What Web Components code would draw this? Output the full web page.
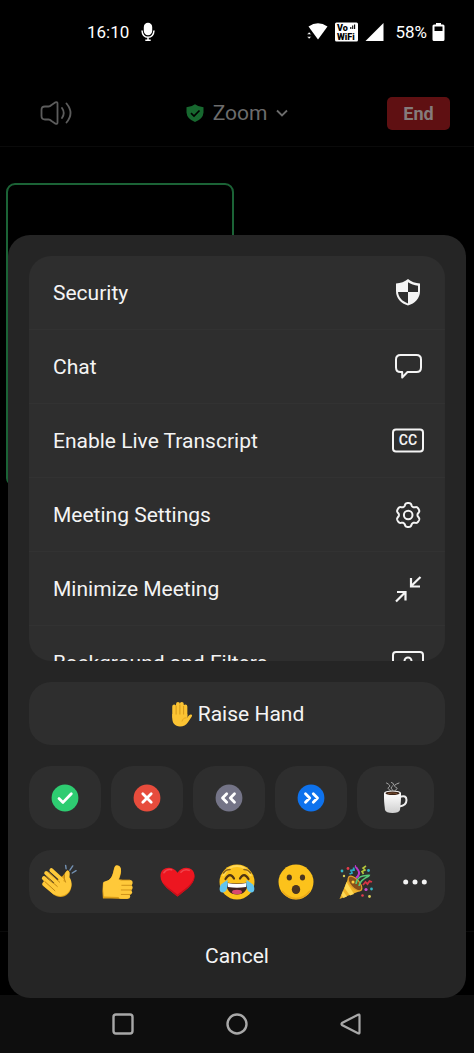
<!DOCTYPE html>
<html lang="en">
<head>
<meta charset="utf-8">
<meta name="viewport" content="width=device-width, initial-scale=1">
<title>Zoom meeting</title>
<style>
  html, body { margin: 0; background: #000; }
  body { font-family: Roboto, "Liberation Sans", sans-serif; color: #f4f4f4; }
</style>
</head>
<body>
<phone-screen>
  <status-bar slot="screen" time="16:10" battery="58%"></status-bar>
  <meeting-header slot="screen" name="Zoom"></meeting-header>
  <meeting-stage slot="screen"></meeting-stage>
  <system-nav slot="screen"></system-nav>
  <more-sheet slot="overlay"></more-sheet>
</phone-screen>

<script>
const BUTTON_RESET = `
  button { appearance: none; border: 0; margin: 0; padding: 0; background: none;
    color: inherit; font: inherit; cursor: pointer; }
  svg { display: block; flex: none; }
`;

function define(name, render) {
  customElements.define(name, class extends HTMLElement {
    connectedCallback() {
      if (this.shadowRoot) return;
      const t = document.createElement('template');
      t.innerHTML = render(this);
      this.attachShadow({ mode: 'open' }).append(t.content.cloneNode(true));
    }
  });
}

const svg = (w, h, body, vb = `0 0 ${w} ${h}`) =>
  `<svg width="${w}" height="${h}" viewBox="${vb}" fill="none" aria-hidden="true">${body}</svg>`;

const LINE = 'stroke="#f4f4f4" stroke-width="2" stroke-linecap="round" stroke-linejoin="round"';

/* Outline of a six-toothed gear with rounded teeth. */
const gearPath = (cx, cy) => {
  const points = [];
  for (let i = 0; i < 180; i++) {
    const a = i * Math.PI / 90 - Math.PI / 2;
    const wave = Math.cos((a + Math.PI / 2) * 6);
    const r = 10.5 + 1.5 * Math.tanh(1.6 * (wave + 0.3));
    points.push(`${(cx + r * Math.cos(a)).toFixed(2)} ${(cy + r * Math.sin(a)).toFixed(2)}`);
  }
  return `M${points.join('L')}Z`;
};

const ICONS = {
  security: svg(32, 32, `
    <path d="M16 2C19 4.600 23.500 6.300 28 6.600V14C28 21.500 23 26.300 16 28.600C9 26.300 4 21.500 4 14V6.600C8.500 6.300 13 4.600 16 2Z" fill="#f4f4f4"/>
    <path d="M16 5.200C18.800 7.100 22.200 8.300 26 8.800V15H16Z" fill="#2e2e2e"/>
    <path d="M6 15H16V26.400C10.500 24.400 6.400 20.600 6 15Z" fill="#2e2e2e"/>`),
  chat: svg(32, 32, `<path d="M8.500 4H24.500Q29 4 29 8.500V16.500Q29 21 24.500 21H15.500L10.200 26.500V21H8.500Q4 21 4 16.500V8.500Q4 4 8.500 4Z" ${LINE}/>`),
  transcript: svg(32, 32, `
    <rect x="1" y="4.500" width="30" height="22" rx="3" ${LINE}/>
    <text x="16" y="20" text-anchor="middle" font-family="Roboto, sans-serif" font-size="14" font-weight="600" fill="#f4f4f4">CC</text>`),
  settings: svg(32, 32, `<path d="${gearPath(16.2, 16)}" ${LINE}/><circle cx="16.200" cy="16" r="4.300" ${LINE}/>`),
  minimize: svg(32, 32, `
    <path d="M28.500 4L19.500 12.800M19 5V13.500H28M4 28.500L13 19.500M5 19H13.500V27.500" stroke="#f4f4f4" stroke-width="2.200"/>`),
  background: svg(32, 32, `
    <rect x="1" y="5" width="30" height="22" rx="3" ${LINE}/>
    <circle cx="16" cy="14" r="3.500" ${LINE}/><path d="M9 26Q10 20 16 20T23 26" ${LINE}/>`),
};

const disc = (color, mark) => svg(28, 28, `
  <circle cx="14" cy="14" r="13.400" fill="${color}"/>
  <path d="${mark}" stroke="#fff" stroke-width="2.800" stroke-linecap="round" stroke-linejoin="round"/>`);

const EMOJI = {
  hand: svg(24, 28, `
    <g stroke="#fcc433" stroke-width="3.900" stroke-linecap="round">
      <path d="M4.200 6.500V17M8 4V16M11.800 4V16M15.400 6.500V17"/></g>
    <path d="M2.300 14H17.300V18C18.300 15.500 19.800 14.200 21.300 14.500C22.500 14.800 22.200 16 21.500 17L17.800 22.500C16 25.400 13.500 26.500 10 26.500C4.800 26.500 2.300 22.800 2.300 18.500Z" fill="#fcc433"/>
    <path d="M6.100 6V14.500M9.900 4.500V14.500M13.600 6V14.500" stroke="#c98d14" stroke-width=".8"/>
    <path d="M12 21.500C12.500 19 14 17.800 16.500 17.800" stroke="#e5a51c" stroke-width=".9"/>`),
  yes: disc('#2ecc71', 'M8 14.600L12 18.400L20.300 9.800'),
  no: disc('#e74c3c', 'M9.800 9.800L18.200 18.200M18.200 9.800L9.800 18.200'),
  slower: disc('#747487', 'M11.700 9.700L7.500 14L11.700 18.300M19.500 9.700L15.300 14L19.500 18.300'),
  faster: disc('#0e72ed', 'M8.500 9.700L12.700 14L8.500 18.300M16.300 9.700L20.500 14L16.300 18.300'),
  coffee: svg(28, 36, `
    <defs><linearGradient id="m" x1="0" y1="0" x2="0" y2="1"><stop stop-color="#fff"/><stop offset="1" stop-color="#cfcfcf"/></linearGradient></defs>
    <path d="M18.500 17Q25.500 14.500 25.500 20Q25.500 25.500 18.500 26.500" stroke="#eee" stroke-width="2"/>
    <path d="M3 13V18C3 23 3.800 27 4 30Q5 33 11.500 33T19 30C19.200 27 20 23 20 18V13Z" fill="url(#m)"/>
    <ellipse cx="11.500" cy="13" rx="8.500" ry="2.600" fill="#f5f5f5"/>
    <ellipse cx="11.500" cy="13.200" rx="7" ry="1.700" fill="#3b2417"/>
    <path d="M7 13.700Q11.500 12.200 16 13.700" stroke="#8d5a37" stroke-width=".8"/>
    <path d="M9.500 10.500Q5.500 8.500 8 7T5.500 3M12 10.500Q8.500 8 11.500 6T10.500 2.500M14 10.500Q18 8.500 14.500 7T18 3" stroke="#a8a8a8" stroke-width="1" stroke-linecap="round"/>`),
  clap: svg(36, 36, `
    <path d="M4.500 12.500L13 21L24 12.500L28 7.500C30 6 31.500 8 31 10.500L30.500 15C34.500 20 34 27 29.500 31.500C25 36 18.500 36 14 32L3 23Q1.500 21 3.500 20Z" fill="#dca016"/>
    <g stroke="#ffc93a" stroke-width="4.200" stroke-linecap="round">
      <path d="M12 6.500L23 16.500M6.500 9.500L20 21.500M4 15L17 26M4.500 21L15 30"/></g>
    <path d="M21 15.500L26 19Q25 9 28.500 7Q32 6.500 31 14C34.500 19 34 26 29 30.500C24 35 17.500 34.500 13.500 30.500L11 23Z" fill="#ffc93a"/>
    <path d="M9 8.500L21 19.500M6 13L18.500 24M5 18.500L16 28.500M25.800 11Q25 16 27 19.500" stroke="#bd8214" stroke-width="1"/>
    <path d="M27.500 5L27 1.500M31.500 6.500L34.500 2M34 9.500L38 7" stroke="#7391b3" stroke-width="1.500" stroke-linecap="round"/>`, '1 0 38 38'),
  thumb: svg(36, 36, `
    <path d="M4 19.500L9.500 17C14 13.500 14 9.500 15.500 4Q16.500 .5 20 2C24 4 23 10 20.500 16L32 17.500Q35 20 33 22.500Q35 25 32.500 27.500Q34 30 31.500 32Q31 36.500 26 36L12 35.500L4 35.500Q3 27 4 19.500Z" fill="#db9d16"/>
    <path d="M4.500 18.500L10 16.500C14.500 13 14.500 8.500 16 3.500Q17 0 20.500 1.800C24 4 22.500 10 20 16L28 17V34.500L20 34L5 33.500Q3.500 26 4.500 18.500Z" fill="#ffc93a"/>
    <g fill="#ffc93a"><rect x="20" y="16.500" width="14.500" height="5.400" rx="2.600"/><rect x="20" y="21.600" width="14.500" height="5.200" rx="2.600"/><rect x="20" y="26.500" width="14" height="5" rx="2.500"/><rect x="20" y="31" width="12" height="4.800" rx="2.400"/></g>
    <path d="M23 21.900H33M22.500 26.700H33M22.500 31.300H32M22 16.500H32" stroke="#c98b15" stroke-width=".9"/>`, '1 0 37 37'),
  heart: svg(36, 36, `
    <path d="M19 33.500C13 28 1.500 22 1.500 12.500C1.500 2.500 14 1 19 9C24 1 36.500 2.500 36.500 12.500C36.500 22 25 28 19 33.500Z" fill="#ed1620"/>
    <path d="M36 10C37 20 26 25.500 19 31.500C15 28 8 24 4 18.500C7 25 14.500 29.300 19 33.500C25 28 36.500 22 36.500 12.500Z" fill="#c80e19"/>
    <path d="M5 9Q8 4.500 13 6M22.500 8.500Q26 4.500 31 6.500" stroke="#f0444c" stroke-width="1.600" stroke-linecap="round"/>`, '1 0 37 37'),
  joy: svg(36, 36, `
    <circle cx="19" cy="19" r="17.500" fill="#fcc21b"/><path d="M5 13Q10 3 19 3T33 13" stroke="#ffd95a" stroke-width="2"/>
    <path d="M5.500 10Q8 6.500 12 6.500M32.500 10Q30 6.500 26 6.500" stroke="#8f6416" stroke-width="1.600" stroke-linecap="round"/>
    <path d="M7.500 16Q12 8.500 16 15.500M22 15.500Q26 8.500 30.500 16" stroke="#513513" stroke-width="2.200" stroke-linecap="round"/>
    <path d="M8.500 19.500Q19 21.500 29.500 19.500C30 27 26 31.500 19 31.500S8 27 8.500 19.500Z" fill="#3e2320"/>
    <path d="M9.500 20Q19 22 28.500 20L28 24Q19 25.500 10 24Z" fill="#fff"/>
    <ellipse cx="19" cy="29" rx="5" ry="2.200" fill="#d9486e"/>
    <path d="M9.500 17C10 24 9 29.500 4.500 29.500C1 29.500 1 24.500 3 21.500Q5.500 19.500 9.500 17ZM28.500 17C28 24 29 29.500 33.500 29.500C37 29.500 37 24.500 35 21.500Q32.500 19.500 28.500 17Z" fill="#62c5ef"/>`, '1 1 36 36'),
  wow: svg(36, 36, `
    <circle cx="19" cy="19" r="17.500" fill="#fcc21b"/><path d="M5 28Q11 35.500 19 35.500T33 28" stroke="#e9a71a" stroke-width="1.600"/>
    <ellipse cx="12.300" cy="14.500" rx="2.600" ry="3" fill="#4a3520"/><ellipse cx="25.500" cy="14.500" rx="2.600" ry="3" fill="#4a3520"/>
    <ellipse cx="19" cy="26.500" rx="4.200" ry="4.500" fill="#4a3520"/>`, '1 1 36 36'),
  party: svg(36, 36, `
    <path d="M11 12.500L1.500 35L23.500 26.500Z" fill="#f0b429"/>
    <path d="M8.500 18L16 30L12 31.500L6.500 24ZM5 27L9 32.500L5.500 34L3.500 31Z" fill="#ffda55"/>
    <ellipse cx="17" cy="19.500" rx="4.400" ry="9" transform="rotate(-42 17 19.500)" fill="#86501c" stroke="#e3a12a" stroke-width="1.200"/>
    <path d="M18 20Q19 13 25 12T32 11.500M21 22Q22 16 31 12" stroke="#58c878" stroke-width="1.500"/>
    <path d="M18 14Q23 10 20 6T18 2" stroke="#bc38c8" stroke-width="2"/>
    <path d="M11.500 10L14 9L13 6.500L16 6L15.500 3.500" stroke="#2aa9c5" stroke-width="1.800"/>
    <path d="M25.500 10L24 7.500L27 6L25 4L28 2" stroke="#b5c83c" stroke-width="1.600"/>
    <path d="M25 21L27.500 18L29.500 20L31.500 17L34 18" stroke="#d73545" stroke-width="1.800"/>
    <g fill="#35b6c5"><circle cx="4" cy="7" r="1.400"/><circle cx="30.500" cy="6.500" r="1.400"/><circle cx="33.500" cy="25" r="1.400"/></g>
    <g fill="#e63c4c"><circle cx="10" cy="4.500" r="1.400"/><circle cx="24.500" cy="31.500" r="1.300"/></g>
    <g fill="#d9ce5a"><circle cx="6" cy="12" r="1.200"/><circle cx="31.500" cy="32.500" r="1.400"/></g>
    <circle cx="28" cy="25.500" r="1.600" fill="#c94bd0"/><circle cx="15" cy="18" r="1.500" fill="#ffd23f"/>`, '0 0 36 36'),
  more: svg(36, 36, `<g fill="#f4f4f4"><circle cx="8.700" cy="18" r="2.500"/><circle cx="18" cy="18" r="2.500"/><circle cx="27.300" cy="18" r="2.500"/></g>`),
};

/* Stacks the meeting screen and whatever is raised over it in one grid cell. */
define('phone-screen', () => `
  <style>
    :host { display: grid; min-height: 100vh; background: #000; }
    .screen, .overlay { grid-area: 1 / 1; min-width: 0; }
    .screen { display: flex; flex-direction: column; }
    .overlay { align-self: end; padding: 0 8px 55px; z-index: 1; }
  </style>
  <div class="screen"><slot name="screen"></slot></div>
  <div class="overlay"><slot name="overlay"></slot></div>`);

define('status-bar', el => `
  <style>
    :host { display: block; padding-bottom: 16px; }
    .row { display: flex; align-items: center; justify-content: space-between;
      height: 64px; padding: 0 29px 0 87px; font-size: 17px; line-height: 20px; color: #fff; }
    .group { display: flex; align-items: center; gap: 7px; }
    .start { gap: 12px; }
    .power { display: flex; align-items: center; gap: 5px; padding-left: 4px; }
    svg { display: block; }
  </style>
  <div class="row">
    <div class="group start"><span>${el.getAttribute('time')}</span>
      ${svg(14, 20, `<rect x="2.800" y=".8" width="8.400" height="12.400" rx="4.200" fill="#fff"/><path d="M1 8.500Q1.500 15.300 7 15.300T13 8.500M7 15.500V18M4.300 18.300H9.700" stroke="#fff" stroke-width="1.500"/>`)}
    </div>
    <div class="group">
      ${svg(21, 20, `<path d="M1.500 4.500Q11 -2 20.500 4.500L11 17.500Z" fill="#fff"/><path d="M0 12.500L2.200 10L4.400 12.500ZM0 14.500L2.200 17L4.400 14.500Z" fill="#fff" stroke="#000" stroke-width=".5"/>`)}
      ${svg(23, 20, `<rect y=".5" width="23" height="19" rx="1.500" fill="#fff"/>
        <g font-family="Roboto, sans-serif" font-weight="900" font-size="9" fill="#000"><text x="2" y="8.500">Vo</text><text x="2" y="17.500">WiFi</text></g>
        <path d="M15.800 7V5M17.700 7V3.500M19.600 7V2.500" stroke="#000" stroke-width="1.100"/>`)}
      ${svg(19, 20, `<path d="M18.500 1V19H.5Z" fill="#fff"/>`)}
      <div class="power"><span>${el.getAttribute('battery')}</span>
        ${svg(13, 20, `<path d="M4 1H9V2.500H11Q12.500 2.500 12.500 4V17.500Q12.500 19 11 19H2Q.5 19 .5 17.500V4Q.5 2.500 2 2.500H4Z" fill="#fff"/><path d="M2.500 4.500H10.500V9H2.500Z" fill="#000"/>`)}
      </div>
    </div>
  </div>`);

define('meeting-header', el => `
  <style>${BUTTON_RESET}
    :host { display: grid; grid-template-columns: 1fr auto 1fr; align-items: center; box-sizing: border-box;
      height: 67px; padding: 0 24px; border-bottom: 1px solid #0a0a0a; color: #6c6c6c; }
    .audio { justify-self: start; padding-left: 16px; }
    .title { display: flex; align-items: center; gap: 9px; font-size: 21px; line-height: 24px; }
    .end { justify-self: end; width: 63px; height: 33px; border-radius: 5px; background: #5f1012;
      color: #857b7b; font-size: 18px; font-weight: 700; }
  </style>
  <button class="audio" aria-label="Speaker">
    ${svg(32, 26, `<g stroke="#5c5c5c" stroke-width="1.800" stroke-linecap="round" stroke-linejoin="round"><path d="M5 6.500H8.500Q10 6.500 11.500 5L15.500 2.300Q17.500 1.500 17.500 3.500V22.500Q17.500 24.500 15.500 23.700L11.500 21Q10 19.500 8.500 19.500H5Q1.500 19.500 1.500 16V10Q1.500 6.500 5 6.500Z"/><path d="M22 8Q25.500 13 22 18M26.500 3.500Q34.500 13 26.500 22.500"/></g>`)}
  </button>
  <button class="title">
    ${svg(18, 20, `<path d="M9 1.200Q12.500 4 17.500 4.200V9.500Q17 16 9 19Q1 16 .5 9.500V4.200Q5.500 4 9 1.200Z" fill="#17682f"/><path d="M5 10.200L8 13L13.500 7.500" stroke="#000" stroke-width="1.700"/>`)}
    <span>${el.getAttribute('name')}</span>
    ${svg(12, 8, `<path d="M1 1.500L6 6.500L11 1.500" stroke="#6c6c6c" stroke-width="1.800"/>`)}
  </button>
  <button class="end">End</button>`);

define('meeting-stage', () => `
  <style>
    :host { flex: 1; display: flex; flex-direction: column; justify-content: space-between; padding-top: 36px; }
    .tile { box-sizing: border-box; width: calc(50% - 9px); aspect-ratio: 3 / 4; margin-left: 6px;
      border: 2px solid #1b6336; border-radius: 9px; }
    .toolbar { height: 63px; border-top: 1px solid #0a0a0a; }
  </style>
  <div class="tile"></div>
  <div class="toolbar"></div>`);

define('system-nav', () => `
  <style>${BUTTON_RESET}
    :host { display: flex; align-items: center; justify-content: center; gap: 90px; height: 58px; background: #0e0e0e; }
  </style>
  <button aria-label="Recent apps">${svg(24, 24, `<rect x="2.500" y="2.500" width="19" height="19" rx="2.500" stroke="#a8a8a8" stroke-width="2.400"/>`)}</button>
  <button aria-label="Home">${svg(24, 24, `<circle cx="12" cy="12" r="9.500" stroke="#a8a8a8" stroke-width="2.400"/>`)}</button>
  <button aria-label="Back">${svg(24, 24, `<path d="M20.500 3.500V20.500Q20.500 22 19 21.300L3 13Q2 12 3 11L19 2.700Q20.500 2 20.500 3.500Z" stroke="#a8a8a8" stroke-width="2.200"/>`)}</button>`);

define('menu-row', el => `
  <style>${BUTTON_RESET}
    :host { display: block; border-bottom: 1px solid #323232; }
    button { display: flex; align-items: center; justify-content: space-between; width: 100%; height: 73px;
      padding: 0 21px 0 24px; font-size: 21px; line-height: 24px; text-align: left; white-space: nowrap; }
  </style>
  <button><slot></slot>${ICONS[el.getAttribute('icon')]}</button>`);

define('reaction-button', el => `
  <style>${BUTTON_RESET}
    :host { display: flex; }
    button { display: flex; align-items: center; justify-content: center; flex: 1; height: 63px; }
    :host([pill]) button { padding: 0 22px; border-radius: 22px; background: #2e2e2e; }
    :host([pill="wide"]) button { padding: 0 25px 0 24px; }
  </style>
  <button aria-label="${el.getAttribute('label')}">${EMOJI[el.getAttribute('icon')]}</button>`);

define('more-sheet', () => `
  <style>${BUTTON_RESET}
    :host { display: flex; flex-direction: column; gap: 21px; padding: 21px 21px 0; border-radius: 22px; background: #252525; }
    .menu { height: 405px; overflow-y: auto; scrollbar-width: none; border-radius: 22px; background: #2e2e2e; }
    .raise { display: flex; align-items: center; justify-content: center; gap: 4px; height: 63px;
      border-radius: 22px; background: #2e2e2e; font-size: 21px; }
    .quick { display: flex; gap: 10px; }
    .reactions { display: flex; border-radius: 22px; background: #2e2e2e; }
    .reactions > * { flex: 1; }
    .cancel { height: 64px; padding-bottom: 20px; font-size: 21px; }
  </style>
  <nav class="menu" aria-label="More">
    <menu-row icon="security">Security</menu-row>
    <menu-row icon="chat">Chat</menu-row>
    <menu-row icon="transcript">Enable Live Transcript</menu-row>
    <menu-row icon="settings">Meeting Settings</menu-row>
    <menu-row icon="minimize">Minimize Meeting</menu-row>
    <menu-row icon="background">Background and Filters</menu-row>
  </nav>
  <button class="raise">${EMOJI.hand}<span>Raise Hand</span></button>
  <div class="quick">
    <reaction-button pill icon="yes" label="Yes"></reaction-button>
    <reaction-button pill icon="no" label="No"></reaction-button>
    <reaction-button pill icon="slower" label="Slow down"></reaction-button>
    <reaction-button pill icon="faster" label="Speed up"></reaction-button>
    <reaction-button pill="wide" icon="coffee" label="Away"></reaction-button>
  </div>
  <div class="reactions">
    <reaction-button icon="clap" label="Clap"></reaction-button>
    <reaction-button icon="thumb" label="Thumbs up"></reaction-button>
    <reaction-button icon="heart" label="Heart"></reaction-button>
    <reaction-button icon="joy" label="Joy"></reaction-button>
    <reaction-button icon="wow" label="Surprised"></reaction-button>
    <reaction-button icon="party" label="Celebrate"></reaction-button>
    <reaction-button icon="more" label="More reactions"></reaction-button>
  </div>
  <button class="cancel">Cancel</button>`);
</script>
</body>
</html>
